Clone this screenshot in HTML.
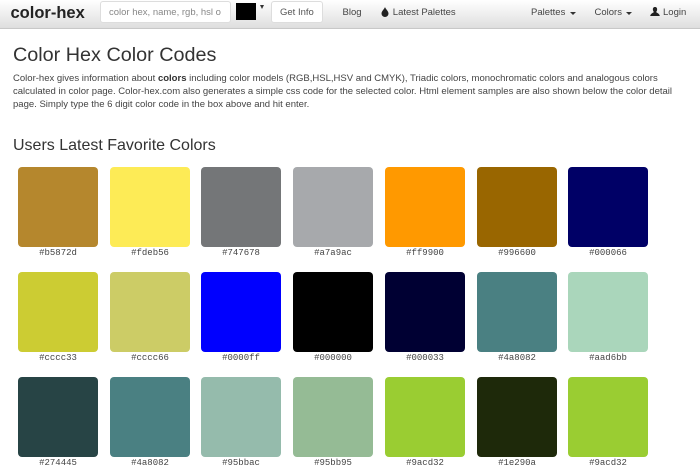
<!DOCTYPE html>
<html><head><meta charset="utf-8">
<style>
html,body{margin:0;padding:0;background:#fff}
body{width:700px;height:473px;overflow:hidden;position:relative;font-family:"Liberation Sans",sans-serif;color:#333}
.a{position:absolute;white-space:nowrap}
#nav{position:absolute;left:0;top:0;width:700px;height:28px;background:linear-gradient(#ffffff,#dedede);border-bottom:1px solid #c8c8c8;box-sizing:content-box}
.n{font-size:9.5px;color:#444;top:6px;line-height:13px}
.box{position:absolute;background:#fff;border:1px solid #ddd;border-radius:3px;box-sizing:border-box}
.s{position:absolute;width:80px;height:80px;border-radius:4px}
.l{position:absolute;width:80px;text-align:center;font-family:"Liberation Mono",monospace;font-size:9px;line-height:11px;color:#444}
.c{position:absolute;width:0;height:0;border-left:3px solid transparent;border-right:3px solid transparent;border-top:3px solid #333}
</style></head><body>
<div id="nav"></div>
<div class="a" style="left:10.500px;top:2px;font-size:16.500px;line-height:23px;font-weight:bold;color:#222">color-hex</div>
<div class="box" style="left:100px;top:1px;width:131px;height:22px"></div>
<div class="a" style="left:109px;top:5.500px;font-size:9.500px;line-height:13px;color:#888;width:112px;overflow:hidden">color hex, name, rgb, hsl o</div>
<div class="a" style="left:236px;top:3px;width:20px;height:17px;background:#000"></div>
<div class="a" style="left:260px;top:5px;width:0;height:0;border-left:2.500px solid transparent;border-right:2.500px solid transparent;border-top:4px solid #333"></div>
<div class="box" style="left:271px;top:1px;width:52px;height:22px"></div>
<div class="a n" style="left:280px;top:5.500px;color:#555">Get Info</div>
<div class="a n" style="left:342.500px">Blog</div>
<svg class="a" style="left:381px;top:7px" width="8" height="10" viewBox="0 0 8 10"><path d="M4 0C4.500 2 7.500 4 7.500 6.500A3.500 3.500 0 0 1 .5 6.500C.5 4 3.500 2 4 0Z" fill="#222"/></svg>
<div class="a n" style="left:392.800px">Latest Palettes</div>
<div class="a n" style="left:531px">Palettes</div>
<div class="c" style="left:570px;top:12px"></div>
<div class="a n" style="left:594.500px">Colors</div>
<div class="c" style="left:626px;top:12px"></div>
<svg class="a" style="left:650px;top:7px" width="10" height="9" viewBox="0 0 10 9"><path d="M5 0C6.700 0 7.300 1.300 7.100 2.800C7 3.800 6.500 4.500 6.200 5C6.300 5.800 9.500 6.300 9.800 9H.2C.5 6.300 3.700 5.800 3.800 5C3.500 4.500 3 3.800 2.900 2.800C2.700 1.300 3.300 0 5 0Z" fill="#222"/></svg>
<div class="a n" style="left:663px">Login</div>

<div class="a" style="left:13px;top:41.500px;font-size:19.800px;line-height:26px;color:#333">Color Hex Color Codes</div>
<div class="a" style="left:13px;top:71.500px;font-size:9.530px;line-height:13.300px;color:#444">Color-hex gives information about <b style="color:#333">colors</b> including color models (RGB,HSL,HSV and CMYK), Triadic colors, monochromatic colors and analogous colors<br>calculated in color page. Color-hex.com also generates a simple css code for the selected color. Html element samples are also shown below the color detail<br>page. Simply type the 6 digit color code in the box above and hit enter.</div>
<div class="a" style="left:13px;top:136px;font-size:16px;line-height:20px;color:#333">Users Latest Favorite Colors</div>

<div class="s" style="left:18px;top:167px;background:#b5872d"></div><div class="l" style="left:18px;top:248px">#b5872d</div>
<div class="s" style="left:110px;top:167px;background:#fdeb56"></div><div class="l" style="left:110px;top:248px">#fdeb56</div>
<div class="s" style="left:201px;top:167px;background:#747678"></div><div class="l" style="left:201px;top:248px">#747678</div>
<div class="s" style="left:293px;top:167px;background:#a7a9ac"></div><div class="l" style="left:293px;top:248px">#a7a9ac</div>
<div class="s" style="left:385px;top:167px;background:#ff9900"></div><div class="l" style="left:385px;top:248px">#ff9900</div>
<div class="s" style="left:477px;top:167px;background:#996600"></div><div class="l" style="left:477px;top:248px">#996600</div>
<div class="s" style="left:568px;top:167px;background:#000066"></div><div class="l" style="left:568px;top:248px">#000066</div>

<div class="s" style="left:18px;top:272px;background:#cccc33"></div><div class="l" style="left:18px;top:353px">#cccc33</div>
<div class="s" style="left:110px;top:272px;background:#cccc66"></div><div class="l" style="left:110px;top:353px">#cccc66</div>
<div class="s" style="left:201px;top:272px;background:#0000ff"></div><div class="l" style="left:201px;top:353px">#0000ff</div>
<div class="s" style="left:293px;top:272px;background:#000000"></div><div class="l" style="left:293px;top:353px">#000000</div>
<div class="s" style="left:385px;top:272px;background:#000033"></div><div class="l" style="left:385px;top:353px">#000033</div>
<div class="s" style="left:477px;top:272px;background:#4a8082"></div><div class="l" style="left:477px;top:353px">#4a8082</div>
<div class="s" style="left:568px;top:272px;background:#aad6bb"></div><div class="l" style="left:568px;top:353px">#aad6bb</div>

<div class="s" style="left:18px;top:377px;background:#274445"></div><div class="l" style="left:18px;top:458px">#274445</div>
<div class="s" style="left:110px;top:377px;background:#4a8082"></div><div class="l" style="left:110px;top:458px">#4a8082</div>
<div class="s" style="left:201px;top:377px;background:#95bbac"></div><div class="l" style="left:201px;top:458px">#95bbac</div>
<div class="s" style="left:293px;top:377px;background:#95bb95"></div><div class="l" style="left:293px;top:458px">#95bb95</div>
<div class="s" style="left:385px;top:377px;background:#9acd32"></div><div class="l" style="left:385px;top:458px">#9acd32</div>
<div class="s" style="left:477px;top:377px;background:#1e290a"></div><div class="l" style="left:477px;top:458px">#1e290a</div>
<div class="s" style="left:568px;top:377px;background:#9acd32"></div><div class="l" style="left:568px;top:458px">#9acd32</div>
</body></html>
